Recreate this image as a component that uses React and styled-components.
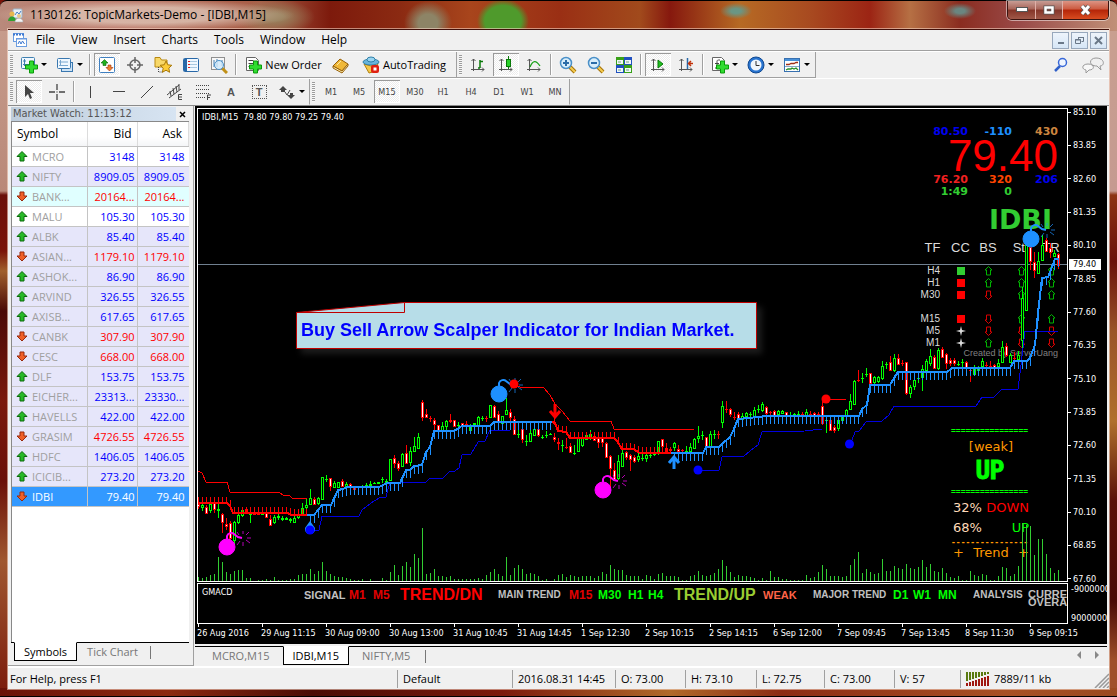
import { useState } from 'react';

import styled, { createGlobalStyle } from 'styled-components'


const GlobalStyle = createGlobalStyle`
  * {
    box-sizing: border-box;
  }

  body {
    margin: 0;
    background: #7a1208;
  }

  button, input {
    font: inherit;
    color: inherit;
    margin: 0;
    padding: 0;
    border: 0;
    background: none;
  }

  svg {
    display: block;
    flex: none;
  }
`

const UI = `'Open Sans', 'Noto Sans', sans-serif`
const TAHOMA = `'DejaVu Sans Condensed', 'DejaVu Sans', sans-serif`
const ARIAL = `'Liberation Sans', Arial, sans-serif`

/* ---------- window frame ---------- */

const Window = styled.div`
  display: flex;
  flex-direction: column;
  min-height: 100vh;
  padding: 0 8px 7px;
  border: 1px solid #000;
  border-width: 1px 0 1px 0;
  border-radius: 7px 7px 0 0;
  font: 11px/16px ${UI};
  color: #000;
  background:
    radial-gradient(ellipse 26px 22px at 503px 20px, #4f9a2c 70%, transparent),
    radial-gradient(ellipse 24px 22px at 428px 22px, #8d8466 40%, transparent),
    radial-gradient(ellipse 16px 8px at 736px 10px, #6a9684 30%, transparent),
    radial-gradient(ellipse 16px 8px at 960px 10px, #6a8680 30%, transparent),
    radial-gradient(ellipse 150px 16px at 145px 14px, rgba(226, 205, 190, 0.75) 50%, transparent),
    radial-gradient(ellipse 40px 18px at 275px 16px, #98805c 20%, transparent),
    linear-gradient(90deg, #b98a7c 0, #b5695a 120px, #a85f48 260px, #7d1a0c 330px, #8b2a12 400px, #a8451c 470px,
      #9a2f14 560px, #a14a1c 640px, #86180e 670px, #b66a24 740px, #a84a20 810px, #9c2414 870px, #b67044 910px,
      #8a2c20 960px, #9a4a48 1020px, #c09078 100%) 0 0 / 100% 30px no-repeat,
    linear-gradient(90deg, #6a1208, #8c2a10 15%, #4a0c06 28%, #7c1a0c 45%, #b06a2a 60%, #8c2c14 70%, #a85024 90%, #9a4a20) 0 100% / 100% 8px no-repeat,
    linear-gradient(180deg, #c9a090, #b98878 190px, #6a100a 194px, #7a1408 250px, #a0602c 270px, #4a0a06 310px, #7a1a0c 400px, #6a1008 480px, #a05830 560px, #7a1a0c) 0 0 / 8px 100% no-repeat,
    linear-gradient(180deg, #c9a090, #c59a90 190px, #8c3414 194px, #6a100a 260px, #9a5428 330px, #b0702c 420px, #5a1008 500px, #4a0a06 600px, #a0502a 660px) 100% 0 / 8px 100% no-repeat;
`

const TitleBar = styled.header`
  display: flex;
  align-items: center;
  height: 28px;
`

const Title = styled.h1`
  flex: 1;
  margin: 0 0 0 6px;
  font-size: 12px;
  font-weight: 400;
`

const CaptionButtons = styled.div`
  display: flex;
  align-self: flex-start;
  height: 19px;
  border: 1px solid #3a1410;
  border-top: 0;
  border-radius: 0 0 5px 5px;
  box-shadow: 0 0 0 1px rgba(255, 255, 255, 0.5);
  overflow: hidden;
`

const CaptionButton = styled.button`
  display: grid;
  place-items: center;
  width: ${({ $close }) => ($close ? 46 : 27)}px;
  border-left: ${({ $first }) => ($first ? 0 : 1)}px solid #e0b0a8;
  background: ${({ $close }) => $close
    ? 'linear-gradient(#dc9484, #cc5a40 45%, #b42408 50%, #d84c20)'
    : 'linear-gradient(#c89c94, #a86458 45%, #843428 50%, #a05848)'};
`

const Client = styled.div`
  flex: 1;
  display: flex;
  flex-direction: column;
  background: #f0f0f0;
  border-top: 1px solid #40100a;
  box-shadow: 0 0 0 1px rgba(255, 225, 210, 0.55);
`

/* ---------- menu ---------- */

const MenuBar = styled.nav`
  display: flex;
  align-items: center;
  height: 21px;
  padding: 0 2px 0 4px;
  border-bottom: 1px solid #a0a0a0;
  font-size: 12px;
`

const MenuItems = styled.div`
  flex: 1;
  display: flex;
  gap: 16px;
  padding-left: 8px;
`

const MenuButton = styled.button``

const MdiButtons = styled.div`
  display: flex;
  gap: 2px;
`

const MdiButton = styled.button`
  display: grid;
  place-items: center;
  width: 17px;
  height: 17px;
  border: 1px solid #98a8bc;
  background: linear-gradient(#eef4fb, #d6e6f6);
`

/* ---------- toolbars ---------- */

const ToolRow = styled.div`
  display: flex;
  height: 27px;
  border-top: 1px solid #fff;
`

const ToolGroup = styled.div`
  display: flex;
  align-items: center;
  padding-right: ${({ $pad }) => $pad || 0}px;
  border-right: 1px solid #a0a0a0;
  border-bottom: 1px solid ${({ $last }) => ($last ? 'transparent' : '#a0a0a0')};
`

const Grip = styled.span`
  width: 3px;
  height: 20px;
  margin: 0 2px;
  background: repeating-linear-gradient(#9c9c9c 0 1px, #f8f8f8 1px 2px);
`

const Tool = styled.button`
  display: flex;
  align-items: center;
  justify-content: center;
  width: ${({ $wide }) => $wide || 26}px;
  height: 23px;
  margin: 0 1px;
  gap: 3px;
  background: ${({ $on }) => ($on ? 'repeating-conic-gradient(#fff 0 25%, #ececec 0 50%) 0 0 / 2px 2px' : 'none')};
  box-shadow: ${({ $on }) => ($on ? 'inset 1px 1px #9a9a9a, inset -1px -1px #fff' : 'none')};
`

const ToolText = styled.span`
  font-size: ${({ $small }) => ($small ? 9 : 11)}px;
  font-family: ${({ $small }) => ($small ? TAHOMA : UI)};
  color: ${({ $small }) => ($small ? '#444' : '#000')};
  white-space: nowrap;
`

const ToolLetter = styled.span`
  width: 13px;
  font: bold 11px/12px ${ARIAL};
  text-align: center;
  color: #555;
  outline: ${({ $boxed }) => ($boxed ? '1px dotted #555' : 'none')};
`

const Divider = styled.span`
  width: 2px;
  height: 21px;
  margin: 0 2px;
  border-left: 1px solid #a0a0a0;
  border-right: 1px solid #fff;
`

const Caret = styled.span`
  border: 3px solid transparent;
  border-top-color: #000;
  border-bottom: 0;
`

const RightTools = styled.div`
  display: flex;
  align-items: center;
  gap: 2px;
  margin-left: auto;
`

/* ---------- body ---------- */

const Body = styled.div`
  flex: 1;
  display: flex;
  border-top: 1px solid #8a8a8a;
`

const Watch = styled.aside`
  display: flex;
  flex-direction: column;
  flex: none;
  width: 186px;
  padding: 1px 4px 3px 3px;
  border-right: 1px solid #a0a0a0;
  border-bottom: 1px solid #a0a0a0;
`

const WatchTitle = styled.div`
  display: flex;
  align-items: center;
  height: 14px;
  font: 11px/14px ${TAHOMA};
  color: #555;
`

const WatchName = styled.h2`
  flex: 1;
  margin: 0;
  padding-left: 2px;
  font: inherit;
  background: linear-gradient(90deg, #bfcddb, #d7e4f2);
`

const CloseButton = styled.button`
  width: 13px;
  color: #000;
  display: grid;
  place-items: center;
`

const List = styled.div`
  flex: 1;
  border-left: 1px solid #888;
  border-top: 1px solid #888;
  background: #fff;
`

const Quotes = styled.table`
  width: 100%;
  table-layout: fixed;
  border-collapse: collapse;
`

const HeadCell = styled.th`
  height: 24px;
  padding: 0 ${({ $last }) => ($last ? 6 : 5)}px;
  border-right: 1px solid #dcdcdc;
  border-bottom: 1px solid #c0c0c0;
  text-align: ${({ $left }) => ($left ? 'left' : 'right')};
  font-size: 12px;
  font-weight: 400;
  background: linear-gradient(#fff 60%, #f4f5f7);
`

const QuoteRow = styled.tr`
  height: 20px;
  background: ${({ $bg }) => $bg};
  color: ${({ $color }) => $color};
`

const Cell = styled.td`
  padding: 0 ${({ $last }) => ($last ? 4 : 2)}px 0 0;
  border-right: ${({ $last }) => ($last ? 0 : 1)}px solid #c4c4c4;
  border-bottom: 1px solid #c4c4c4;
  text-align: right;
  line-height: 17px;
  white-space: nowrap;
`

const NameCell = styled(Cell)`
  padding-left: 4px;
  text-align: left;
  color: ${({ $sel }) => ($sel ? '#fff' : '#a0a0a0')};
`

const NameWrap = styled.span`
  display: flex;
  align-items: center;
  gap: 4px;
`

const Tabs = styled.div`
  display: flex;
  height: 20px;
  padding-left: ${({ $pad }) => $pad}px;
  border-top: 1px solid #000;
`

const Tab = styled.button`
  height: 19px;
  margin-top: -1px;
  padding: 0 9px;
  line-height: 18px;
  color: ${({ $on }) => ($on ? '#000' : '#777')};
  background: ${({ $on }) => ($on ? '#fff' : 'none')};
  border: ${({ $on }) => ($on ? '1px solid #000' : '1px solid transparent')};
  border-top-color: ${({ $on }) => ($on ? '#fff' : 'transparent')};
`

const ChartTab = styled(Tab)`
  padding: 0 12px;
`

const TabEnd = styled.span`
  width: 1px;
  height: 13px;
  margin: 3px 0 0 2px;
  background: #777;
`

const TabArrows = styled.div`
  display: flex;
  gap: 13px;
  margin-left: auto;
  padding: 4px 7px 0 0;
`

const ChartColumn = styled.main`
  flex: 1;
  min-width: 0;
  display: flex;
  flex-direction: column;
  padding-right: 2px;
  margin-left: 1px;
`

/* ---------- chart ---------- */

const ChartWindow = styled.section`
  flex: 1;
  display: grid;
  grid-template-columns: minmax(0, 1fr) 39px;
  grid-template-rows: 1fr 41px 20px;
  padding: 2px 0 0 2px;
  background: #000;
  color: #fff;
  font: 9px/12px ${TAHOMA};
  margin-bottom: 2px;
`

const Plot = styled.div`
  position: relative;
  min-height: 474px;
  margin-bottom: 1px;
  border: 1px solid #fff;
  overflow: hidden;
`

const PlotTitle = styled.div`
  padding: 2px 4px;
  white-space: pre;
`

const Drawing = styled.svg`
  position: absolute;
  inset: 0;
  width: 100%;
  height: 100%;
`

const PriceScale = styled.div`
  position: relative;
  display: flex;
  flex-direction: column;
  justify-content: space-between;
  margin: -2px 0 -2px;
`

const Price = styled.span`
  display: flex;
  align-items: center;
  gap: 2px;

  &::before {
    content: '';
    width: 3px;
    height: 1px;
    background: #fff;
  }
`

const CurrentPrice = styled.span`
  position: absolute;
  top: 153px;
  left: 1px;
  width: 32px;
  padding-left: 4px;
  line-height: 11px;
  background: #fff;
  color: #000;
`

const TimeScale = styled.div`
  grid-column: 1 / -1;
  display: flex;
`

const Time = styled.span`
  flex: none;
  width: 64px;
  white-space: nowrap;

  &::before {
    content: '';
    display: block;
    width: 1px;
    height: 3px;
    margin: 0 0 0 1px;
    background: #fff;
  }
`

const Gmacd = styled.div`
  display: grid;
  grid-template-columns: 102px 45px 24px 27px 98px 71px 29px 30px 20px 26px 89px 50px 80px 20px 25px 35px 55px 1fr;
  padding: 2px 0 0 4px;
  border: 1px solid #fff;
  overflow: hidden;
  white-space: nowrap;
`

const Signal = styled.span`
  font: bold ${({ $size }) => $size || 12}px/18px ${ARIAL};
  color: ${({ $color }) => $color};
`

const Stack = styled.span`
  display: flex;
  flex-direction: column;
  font: bold 11px/8px ${ARIAL};
  color: silver;
  padding-top: 4px;
`

const GmacdScale = styled.div`
  display: flex;
  flex-direction: column;
  justify-content: space-between;
  padding: 0 0 0 3px;
  overflow: hidden;
`

/* corner panels over the plot */

const Ticker = styled.div`
  position: absolute;
  top: 17px;
  right: 9px;
  display: grid;
  grid-template-columns: 38px 44px 46px;
  text-align: right;
  font: bold 11px/12px 'DejaVu Sans', sans-serif;
`

const Fig = styled.span`
  color: ${({ $color }) => $color};
`

const LastPrice = styled.span`
  grid-column: 1 / -1;
  font: 44px/36px ${ARIAL};
  color: #f00;
`

const Instrument = styled.div`
  position: absolute;
  top: 96px;
  right: 15px;
  font: bold 27px/30px 'DejaVu Sans', sans-serif;
  color: #32cd32;
`

const Frames = styled.table`
  position: absolute;
  top: 130px;
  right: 7px;
  width: 140px;
  table-layout: fixed;
  border-collapse: collapse;
  font: 10px/12px ${ARIAL};
  color: #dcdcdc;
`

const FrameHead = styled.th`
  height: 26px;
  padding: 0;
  font-weight: 400;
  font-size: 13px;
  vertical-align: top;
  line-height: 18px;
`

const FrameCell = styled.td`
  height: ${({ $gap }) => ($gap ? 24 : 12)}px;
  padding: 0 ${({ $name }) => ($name ? 5 : 0)}px 0 0;
  vertical-align: bottom;
  text-align: ${({ $name }) => ($name ? 'right' : 'center')};

  svg {
    margin: 0 auto;
  }
`

const Credit = styled.div`
  position: absolute;
  top: 238px;
  right: 9px;
  font: 9px/12px ${ARIAL};
  color: #808080;
`

const Trend = styled.div`
  position: absolute;
  top: 317px;
  right: 36px;
  width: 80px;
  font: 13px/20px 'DejaVu Sans', sans-serif;
  color: #ff9800;
`

const Rule = styled.div`
  font: bold 8px/10px 'DejaVu Sans Mono', monospace;
  margin-bottom: ${({ $tight }) => ($tight ? -5 : 1)}px;
  color: ${({ $color }) => $color};
`

const TrendLine = styled.div`
  display: flex;
  justify-content: ${({ $center }) => ($center ? 'center' : 'space-between')};
  padding: 0 2px;
  color: ${({ $color }) => $color};
`

const TrendUp = styled.div`
  margin: 1px 2px 4px 0;
  text-align: center;
  font: bold 25px/25px 'Liberation Sans Narrow', 'Roboto Condensed', 'Open Sans Condensed', 'Noto Sans ExtraCondensed', 'Noto Sans Condensed', ${ARIAL};
  -webkit-text-stroke: 1px #0f0;
  color: #0f0;
`

const Callout = styled.div`
  position: absolute;
  top: 193px;
  left: 98px;
  width: 461px;
  height: 48px;
  padding: 18px 5px 0;
  font: bold 18px/20px ${ARIAL};
  color: #0000ff;
  white-space: nowrap;
  filter: drop-shadow(5px 5px 3px #1c1c1c);

  svg {
    position: absolute;
    inset: 0;
  }

  span {
    position: relative;
  }
`

/* ---------- status ---------- */

const StatusBar = styled.footer`
  display: flex;
  align-items: center;
  height: 23px;
  border-top: 2px solid #fff;
  padding-left: 2px;
`

const StatusText = styled.span`
  flex: 1;
`

const Status = styled.span`
  display: flex;
  align-items: center;
  gap: 4px;
  width: ${({ $w }) => $w}px;
  height: 18px;
  padding-left: 5px;
  border-left: 1px solid #a0a0a0;
`

const Resize = styled.svg`
  align-self: flex-end;
  margin-left: auto;
`

/* ---------- icons ---------- */

const Svg = ({ s = 18, children }) => (
  <svg width={s} height={s} viewBox={`0 0 ${s} ${s}`} fill="none">{children}</svg>
)

const Plus = ({ x, y }) => (
  <path d={`M${x + 4} ${y}h4v4h4v4h-4v4h-4v-4h-4v-4h4z`} fill="#30dc30" stroke="#0a9a0a" />
)

const Axes = () => (
  <path d="M4.500 3v12M2.500 5l2-2 2 2M2 13.500h13M13 11.500l2 2-2 2" stroke="#555" />
)

const Glass = ({ sign }) => (
  <Svg>
    <path d="M11 11l5 5" stroke="#a87408" strokeWidth="4" />
    <path d="M11 11l5 5" stroke="#f4cc50" strokeWidth="2" />
    <circle cx="7" cy="7" r="5.500" fill="#d8eefb" stroke="#4a90c8" strokeWidth="1.500" />
    <path d={sign} stroke="#2a6ca8" strokeWidth="2" />
  </Svg>
)

const icons = {
  app: (
    <Svg s={16}>
      <rect x="5" y="2" width="9" height="9" rx="1" fill="#e8f0f8" stroke="#9cb4c8" />
      <path d="M7 8l2-3 2 2 2-3" stroke="#4a80c0" />
      <circle cx="4" cy="7" r="2.500" fill="#e8b850" />
      <path d="M0 14c0-6 8-6 8 0z" fill="#30a030" />
      <circle cx="11" cy="9" r="2" fill="#e8c888" />
      <path d="M7 15c0-5 8-5 8 0z" fill="#f4f4f4" stroke="#a0a8b0" strokeWidth=".5" />
    </Svg>
  ),
  charts: (
    <Svg s={16}>
      <rect x="1.500" y="1.500" width="10" height="8" fill="#fff" stroke="#6a9ce0" />
      <path d="M1 2.500h11" stroke="#3c78d0" strokeWidth="2" strokeDasharray="2 1" />
      <rect x="4.500" y="6.500" width="10" height="8" fill="#fff" stroke="#6a9ce0" />
      <path d="M4 7h11" stroke="#6a9ce0" />
      <path d="M6 12l1.500-3 1.500 3 1.500-3 2 3" stroke="#3c78d0" />
    </Svg>
  ),
  newChart: (
    <Svg>
      <rect x="1.500" y="1.500" width="13" height="11" rx="1" fill="#f0f8ff" stroke="#4080b0" />
      <path d="M4.500 3v7M3 8.500h8M3 5h3" stroke="#4080b0" />
      <Plus x={5.500} y={5} />
    </Svg>
  ),
  profiles: (
    <Svg>
      <rect x="5.500" y="6.500" width="11" height="9" fill="#cfe4f6" stroke="#3a78b0" />
      <rect x="1.500" y="2.500" width="13" height="10" rx="1" fill="#f0f8ff" stroke="#3a78b0" />
      <path d="M4.500 4v6M3 6h9M3 9.500h9" stroke="#7aa8d0" />
    </Svg>
  ),
  watch: (
    <Svg>
      <rect x="1.500" y="1.500" width="15" height="15" rx="1" fill="#fff" stroke="#4080c0" />
      <path d="M6.500 3.500L10 7H8v2.500H5V7H3z" fill="#20b020" stroke="#086808" strokeWidth=".6" />
      <path d="M11.500 15L15 11.500h-2V9h-3v2.500H8z" fill="#f08030" stroke="#a03008" strokeWidth=".6" />
    </Svg>
  ),
  data: (
    <Svg>
      <circle cx="9" cy="9" r="5" stroke="#666" strokeWidth="1.500" />
      <path d="M9 1v6M9 11v6M1 9h6M11 9h6" stroke="#666" strokeWidth="1.500" />
    </Svg>
  ),
  navigator: (
    <Svg>
      <path d="M1 4V1.500h5L7.500 4H13v7H1z" fill="#f8d868" stroke="#b88810" />
      <path d="M4.500 11v5h4" stroke="#444" strokeDasharray="1 1" />
      <path d="M12 5l1.800 3.800 4 .5-3 2.800.8 4.200L12 14.200l-3.600 2.100.8-4.200-3-2.800 4-.5z" fill="#fccc38" stroke="#a87808" />
    </Svg>
  ),
  terminal: (
    <Svg>
      <rect x="1.500" y="2.500" width="15" height="13" rx="1" fill="#f0f8ff" stroke="#2868a8" />
      <rect x="2" y="3" width="3" height="12" fill="#2868a8" />
      <path d="M6 5.500h2M6 8.500h2M6 11.500h2" stroke="#e02020" />
      <path d="M8 5.500h7M8 8.500h7M8 11.500h7" stroke="#a8c8e0" />
    </Svg>
  ),
  tester: (
    <Svg>
      <rect x="1.500" y="1.500" width="13" height="12" fill="#f8f8f8" stroke="#909090" />
      <path d="M4 4v7M7 3v8M12 4v6" stroke="#4880b0" />
      <path d="M12 12l5 5" stroke="#c09018" strokeWidth="3" />
      <circle cx="9" cy="9" r="4.500" fill="#cfe8fa" fillOpacity=".8" stroke="#4a90c8" />
    </Svg>
  ),
  order: (
    <Svg>
      <path d="M2.500 1.500h9l3 3v10h-12z" fill="#fff" stroke="#666" />
      <path d="M4.500 4.500h5M4.500 7.500h6M4.500 10.500h4" stroke="#444" />
      <Plus x={5.500} y={5} />
    </Svg>
  ),
  book: (
    <Svg>
      <path d="M1 10l7-7 8 5-6 7z" fill="#f0b838" stroke="#986008" />
      <path d="M1 10v2l9 5 6-7V8l-6 7z" fill="#fff0b0" stroke="#986008" />
      <path d="M5 9l4-4" stroke="#fce8a0" />
    </Svg>
  ),
  auto: (
    <Svg>
      <path d="M2 8l7 2 7-3-2 8-7 2z" fill="#f4c848" stroke="#b08010" />
      <ellipse cx="9" cy="6" rx="8" ry="3" fill="#68b4dc" stroke="#3080a8" />
      <ellipse cx="9" cy="3.500" rx="4" ry="2.500" fill="#98d4f0" stroke="#3080a8" />
      <rect x="9" y="9" width="8" height="8" rx="2" fill="#e02010" />
      <rect x="11.500" y="11.500" width="3" height="3" fill="#fff" />
    </Svg>
  ),
  bars: <Svg><Axes /><path d="M9 12h2M11 4v8M11 5.500h3" stroke="#087808" strokeWidth="1.500" /></Svg>,
  candles: (
    <Svg>
      <Axes />
      <path d="M11.500 0v13" stroke="#087808" />
      <rect x="9.500" y="3.500" width="4" height="7" fill="#28d028" stroke="#087808" />
    </Svg>
  ),
  line: <Svg><Axes /><path d="M5 11c3-7 6-7 10-1" stroke="#18a018" strokeWidth="1.300" /></Svg>,
  zoomIn: <Glass sign="M4 7h6M7 4v6" />,
  zoomOut: <Glass sign="M4 7h6" />,
  tile: (
    <Svg>
      <path d="M1 1h8v8H1zM9 9h8v8H9z" fill="#38a018" />
      <path d="M9 1h8v8H9zM1 9h8v8H1z" fill="#2050c0" />
      <path d="M2 4h6v4H2zM10 4h6v4h-6zM2 12h6v4H2zM10 12h6v4h-6z" fill="#f0f8f8" />
      <path d="M3 6h3M11 6h3M3 14h3M11 14h3" stroke="#70a080" />
    </Svg>
  ),
  scroll: <Svg><Axes /><path d="M9 4l5 4-5 4z" fill="#20c020" stroke="#087808" /></Svg>,
  shift: (
    <Svg>
      <Axes />
      <path d="M10.500 2v11" stroke="#2868a8" strokeWidth="1.500" />
      <path d="M16 7.500h-4M14 5l-2.500 2.500L14 10" stroke="#c03008" strokeWidth="1.500" />
    </Svg>
  ),
  indicators: (
    <Svg>
      <path d="M1.500 1.500h9l3 3v10h-12z" fill="#fff" stroke="#666" />
      <path d="M9 4H7.500C6 4 6 5 6 6v6H4M4 7.500h4" stroke="#444" />
      <Plus x={5.500} y={5} />
    </Svg>
  ),
  clock: (
    <Svg>
      <circle cx="9" cy="9" r="8" fill="#2874d0" stroke="#104890" />
      <circle cx="9" cy="9" r="5.500" fill="#f0f6fc" />
      <path d="M9 5v4.500h3.500" stroke="#333" />
    </Svg>
  ),
  template: (
    <Svg>
      <rect x="1.500" y="2.500" width="15" height="13" fill="#fff" stroke="#3870b0" />
      <path d="M2 4h14" stroke="#4890d8" strokeWidth="2" />
      <path d="M3 8.500h3l2-1h3l2-1h2" stroke="#a03018" strokeWidth="1.300" />
      <path d="M2 10.500h14" stroke="#88a8c8" />
      <path d="M3 14l2-1h3l1-1 2 1 2-1 2 2" stroke="#289028" strokeWidth="1.300" />
    </Svg>
  ),
  search: (
    <Svg>
      <path d="M3 15l5-5" stroke="#3060c8" strokeWidth="2.500" />
      <circle cx="10.500" cy="6.500" r="4" fill="#f0f6ff" stroke="#3868d8" strokeWidth="1.500" />
    </Svg>
  ),
  chat: (
    <svg width="22" height="18" viewBox="0 0 22 18">
      <path d="M14 2c9 0 9 8 4 8l1 4-4-4C6 10 7 2 14 2z" fill="#f0f0f0" stroke="#999" />
      <path d="M6 8c7 0 7 6 1 6l-3 3v-3c-5-1-4-6 2-6z" fill="#f8f8f8" stroke="#999" />
    </svg>
  ),
  cursor: <Svg><path d="M5 2v12l3-3 2 5 2-1-2-5h4z" fill="#444" /></Svg>,
  cross: <Svg><path d="M9 1v6M9 11v6M1 9h6M11 9h6M9 8.500v1" stroke="#444" strokeWidth="1.300" /></Svg>,
  vertical: <Svg><path d="M8.500 3v12" stroke="#444" /></Svg>,
  horizontal: <Svg><path d="M3 8.500h12" stroke="#444" /></Svg>,
  trend: <Svg><path d="M3 15L15 3" stroke="#444" /></Svg>,
  channel: (
    <Svg>
      <path d="M1 12L13 2M3 15l12-9M4 8l1 5M7 5l1 6M10 3l1 6M13 1l0 6" stroke="#444" />
      <path d="M16 11.500h-3.500v5H16M12.500 14H16" stroke="#444" />
    </Svg>
  ),
  fibo: (
    <Svg>
      <path d="M2 2.500h14M2 6.500h14M2 10.500h14M2 14.500h9" stroke="#444" strokeDasharray="1 1" />
      <path d="M13.500 17v-5H17M13.500 14.500H16" stroke="#444" />
    </Svg>
  ),
  arrows: (
    <Svg>
      <path d="M5 3L1 7h2v2h4V7h2z M13 16l4-4h-2v-2h-3v2h-3z" fill="#444" />
      <path d="M7 9l2 3 3-5" stroke="#444" />
    </Svg>
  ),
}

const upArrow = (
  <svg width="12" height="12" viewBox="0 0 12 12">
    <path d="M6 1.500l5 5H8V11H4V6.500H1z" fill="#28b828" stroke="#0a6a0a" strokeLinejoin="round" />
  </svg>
)

const downArrow = (
  <svg width="12" height="12" viewBox="0 0 12 12">
    <path d="M6 11L1 6h3V2h4v4h3z" fill="#f06028" stroke="#98280a" strokeLinejoin="round" />
  </svg>
)

const signs = {
  up: <svg width="9" height="12" viewBox="0 0 9 12"><path d="M4.500 1.500L8 5H6.500v5h-4V5H1z" fill="none" stroke="#00b400" /></svg>,
  down: <svg width="9" height="12" viewBox="0 0 9 12"><path d="M4.500 10.500L1 7h1.500V2h4v5H8z" fill="none" stroke="#d80000" /></svg>,
  green: <svg width="8" height="12"><path d="M0 2h8v8H0z" fill="#32cd32" /></svg>,
  red: <svg width="8" height="12"><path d="M0 2h8v8H0z" fill="#f00" /></svg>,
  star: <svg width="10" height="12" viewBox="0 0 10 12"><path d="M5 1l1 4 4 1-4 1-1 4-1-4-4-1 4-1z" fill="#dcdcdc" /></svg>,
}

/* ---------- data ---------- */

const quotes = [
  ['MCRO', '3148', '3148', 1], ['NIFTY', '8909.05', '8909.05', 1], ['BANK...', '20164...', '20164...', 0],
  ['MALU', '105.30', '105.30', 1], ['ALBK', '85.40', '85.40', 1], ['ASIAN...', '1179.10', '1179.10', 0],
  ['ASHOK...', '86.90', '86.90', 1], ['ARVIND', '326.55', '326.55', 1], ['AXISB...', '617.65', '617.65', 1],
  ['CANBK', '307.90', '307.90', 0], ['CESC', '668.00', '668.00', 0], ['DLF', '153.75', '153.75', 1],
  ['EICHER...', '23313...', '23330...', 1], ['HAVELLS', '422.00', '422.00', 1], ['GRASIM', '4726.55', '4726.55', 0],
  ['HDFC', '1406.05', '1406.05', 1], ['ICICIB...', '273.20', '273.20', 1], ['IDBI', '79.40', '79.40', 0],
]

const rowColor = (name) => {
  if (name === 'IDBI') return '#3399ff'
  if (name === 'BANK...') return '#e0ffff'
  if (name === 'MCRO' || name === 'MALU') return '#fff'
  return '#e6e6fa'
}

const prices = ['85.10', '83.85', '82.60', '81.35', '80.10', '78.85', '77.60', '76.35', '75.10', '73.85', '72.60', '71.35', '70.10', '68.85', '67.60']

const times = [
  '26 Aug 2016', '29 Aug 11:15', '30 Aug 09:00', '30 Aug 13:00', '31 Aug 10:45', '31 Aug 14:45', '1 Sep 12:30',
  '2 Sep 10:15', '2 Sep 14:15', '6 Sep 12:00', '7 Sep 09:45', '7 Sep 13:45', '8 Sep 11:30', '9 Sep 09:15',
]

const frames = [
  ['H4', 'green', 'up', 'up', 'up'],
  ['H1', 'red', 'up', 'up', 'up'],
  ['M30', 'red', 'down', 'up', 'up'],
  ['M15', 'red', 'down', 'up', 'up'],
  ['M5', 'star', 'down', 'down', 'down'],
  ['M1', 'star', 'up', 'down', 'down'],
]

// high, low, body top, body bottom, rising; one bar every 4px
const bars = [
  [502,509,504,506,0],[503,511,505,507,1],[505,513,507,513,0],[503,513,504,510,1],[502,513,502,509,0],[503,518,509,510,1],
  [513,533,514,522,0],[518,530,524,526,0],[521,540,523,538,0],[521,545,522,540,1],[512,524,515,522,1],[509,517,510,515,1],
  [507,513,509,511,0],[511,523,513,514,1],[512,514,513,514,0],[512,514,513,514,0],[511,515,513,514,1],[511,518,513,517,0],
  [515,526,519,525,0],[515,524,517,522,1],[514,520,516,517,1],[516,521,518,519,1],[517,520,518,519,1],[518,523,519,520,1],
  [516,523,518,522,1],[514,519,515,517,1],[503,514,508,513,1],[499,514,505,507,1],[489,504,498,504,1],[497,505,499,504,0],
  [497,505,498,503,1],[477,500,477,499,1],[475,482,479,479,1],[478,491,478,486,0],[481,487,483,487,1],[482,487,482,487,1],
  [479,487,481,486,0],[482,488,484,486,1],[483,490,484,487,0],[487,490,488,489,0],[486,488,487,487,1],[485,488,486,487,1],
  [483,487,485,486,1],[481,486,484,485,1],[482,484,483,483,1],[482,483,482,483,1],[477,483,479,479,1],[479,484,481,482,1],
  [459,480,459,480,1],[455,468,458,463,0],[461,471,463,468,0],[453,467,454,466,1],[445,464,453,463,0],[447,466,451,462,1],
  [437,452,446,451,1],[433,448,437,448,1],[400,421,402,417,0],[409,418,414,417,0],[416,422,418,418,0],[418,432,420,424,0],
  [425,430,425,430,0],[422,431,426,430,1],[420,430,421,426,1],[414,423,420,421,0],[420,427,420,426,0],[422,427,425,425,1],
  [423,426,423,426,0],[421,428,424,425,0],[424,430,426,430,1],[423,425,423,424,1],[416,425,417,425,1],[416,421,418,418,1],
  [416,422,418,418,0],[405,418,405,417,1],[405,417,406,417,0],[411,421,414,421,0],[416,425,416,423,1],[398,414,410,414,1],
  [409,421,412,417,0],[416,435,419,434,0],[430,438,434,434,1],[429,443,429,439,0],[435,446,441,441,1],[428,441,433,441,1],
  [425,436,429,435,1],[428,437,429,435,0],[435,439,437,437,1],[431,438,435,435,1],[433,435,434,434,1],[433,442,437,439,0],
  [438,450,442,443,0],[440,452,445,445,1],[438,449,447,447,0],[443,453,446,452,0],[445,455,453,453,1],[437,452,438,451,1],
  [433,447,437,445,1],[433,440,435,439,1],[430,440,434,438,1],[433,441,436,440,0],[437,448,438,442,0],[437,447,438,442,0],
  [442,458,443,457,0],[455,487,456,468,0],[463,480,470,479,0],[455,480,461,478,1],[449,467,453,466,1],[451,460,452,457,0],
  [454,471,455,459,0],[455,463,457,461,0],[453,462,456,459,1],[454,461,458,458,1],[452,462,455,458,1],[453,458,455,455,1],
  [449,456,454,454,1],[441,455,441,453,1],[439,451,439,446,0],[443,452,448,451,0],[447,453,449,450,0],[442,451,443,447,1],
  [445,452,449,451,0],[449,453,450,450,0],[446,453,451,451,1],[443,452,447,451,1],[438,448,439,448,1],[426,443,436,438,1],
  [431,440,435,435,1],[437,447,437,446,0],[431,447,434,446,1],[430,439,434,434,1],[431,439,434,434,0],[401,428,406,422,1],
  [401,413,409,409,0],[408,417,409,414,0],[412,420,417,417,0],[412,419,414,418,0],[413,421,416,419,1],[412,420,413,416,1],
  [412,417,414,414,1],[407,417,410,416,1],[405,413,409,409,1],[402,412,404,410,1],[406,418,407,413,0],[411,415,412,412,0],
  [410,416,411,415,0],[410,415,411,414,1],[410,414,411,413,1],[412,417,412,416,0],[412,417,415,415,1],[413,416,414,414,1],
  [411,416,414,414,1],[412,416,414,414,0],[409,417,412,415,1],[411,415,414,414,0],[412,417,413,415,0],[412,416,414,415,0],
  [399,425,406,423,0],[417,433,420,420,1],[418,431,420,430,0],[425,433,427,430,0],[419,431,420,428,1],[415,421,417,420,1],
  [409,420,410,416,1],[394,410,401,409,1],[380,405,381,404,1],[370,382,380,380,0],[373,383,378,378,1],[368,377,374,374,1],
  [373,385,373,383,0],[376,384,377,382,1],[376,383,377,381,1],[361,380,366,378,1],[362,369,364,364,1],[356,371,362,370,0],
  [354,372,358,370,1],[354,365,358,364,0],[360,366,363,363,0],[362,395,362,393,0],[385,398,387,393,1],[374,390,380,386,1],
  [374,383,378,378,1],[365,391,369,377,1],[359,372,361,370,1],[349,366,356,363,1],[355,369,357,368,0],[348,370,350,368,1],
  [347,358,349,357,0],[353,369,354,363,0],[358,366,360,363,0],[358,366,360,363,0],[361,366,364,364,1],[359,367,362,362,1],
  [361,370,362,368,0],[367,382,370,370,0],[365,375,368,374,1],[366,373,369,370,1],[358,368,361,366,1],[362,368,365,365,0],
  [361,368,366,366,0],[364,367,365,367,0],[359,368,363,366,1],[341,363,347,362,1],[343,357,346,355,0],[353,363,355,362,1],
  [352,362,358,358,0],[351,362,355,359,1],[287,352,298,340,1],[235,311,245,310,1],[243,270,247,261,0],[252,278,262,270,0],
  [252,273,261,273,1],[235,260,245,260,1],[238,252,240,251,0],[243,258,248,252,0],[250,256,253,256,1],[253,269,254,265,0],
]

const volumes = [
  4,3,4,6,7,24,19,9,7,10,11,11,3,3,0,1,1,2,1,4,1,1,1,2,2,6,7,7,12,7,10,19,10,7,5,4,4,3,2,1,1,2,0,2,0,0,3,1,9,16,6,15,19,
  14,27,23,53,7,8,12,5,5,4,5,2,2,2,2,2,2,3,2,6,9,12,7,5,24,6,13,16,12,7,8,7,5,1,2,0,2,6,7,4,6,5,4,5,5,5,3,5,9,7,16,12,11,
  11,6,5,5,5,2,6,5,2,7,8,5,5,5,4,1,1,5,6,10,6,5,6,8,12,21,15,9,4,6,5,5,4,3,1,3,1,10,4,4,2,2,1,1,1,1,6,3,4,9,16,12,5,5,5,4,
  5,16,22,29,8,12,9,7,8,22,10,10,15,13,12,17,13,12,14,21,14,17,10,9,13,8,4,3,5,1,1,10,6,5,7,6,1,1,5,14,13,5,7,15,58,56,55,
  26,42,42,27,13,8,11,
]

const blueBands = [
  [[307,515],[314,515],[322,505],[331,505],[338,490],[343,489],[347,487],[379,487],[387,483],[400,483],[406,470],[410,470],
    [414,466],[422,465],[426,452],[430,447],[434,431],[454,431],[462,426],[490,426],[494,422],[552,422]],
  [[671,453],[703,453],[706,447],[719,447],[723,443],[730,437],[734,429],[738,419],[758,417],[766,416],[859,416],[862,409],
    [867,405],[870,385],[890,385],[894,378],[898,372],[947,372],[952,368],[1010,368],[1014,361],[1027,361],[1030,358],
    [1033,350],[1035,345],[1038,313],[1042,278],[1048,277],[1052,267],[1055,259],[1059,259]],
]

const redBands = [
  [[197,503],[227,503],[230,506],[233,513],[288,513],[291,515],[307,515]],
  [[552,422],[555,423],[558,431],[566,432],[570,438],[614,438],[617,441],[622,449],[633,449],[640,453],[671,453]],
]

const redStops = [
  '198,471 202,473 206,482 227,482 230,492 279,492 283,495 290,496 292,498 307,498',
  '516,386 520,387 543,387 550,395 555,404 562,411 570,421 611,421 614,429 694,429',
  '826,399 846,399',
]

const blueStops = [
  '310,531 319,530 322,516 359,516 362,510 371,503 379,498 386,497 390,482 426,482 430,478 443,478 450,471 455,471 459,468 462,455 471,454 478,442 485,441 490,430 510,430',
  '698,470 719,470 722,457 744,456 750,451 758,445 762,432 805,431 822,429',
  '850,444 852,440 855,432 859,431 866,422 882,421 889,415 894,406 976,406 982,397 994,397 1001,390 1018,389 1021,365 1025,331 1058,331',
]

const levelAt = (band, x) => {
  for (let i = 1; i < band.length; i++) {
    const [x0, y0] = band[i - 1]
    const [x1, y1] = band[i]
    if (x >= x0 && x <= x1) return Math.round(y0 + ((y1 - y0) * (x - x0)) / (x1 - x0))
  }
  return null
}

/* ---------- chart drawing ---------- */

const Band = ({ points, color, up }) => {
  const teeth = bars.map((_, i) => 198 + i * 4).filter((x) => levelAt(points, x) !== null)
  return (
    <g fill={color}>
      <polyline points={points.join(' ')} fill="none" stroke={color} strokeWidth="2" />
      {teeth.map((x) => (
        <rect key={x} x={x} y={levelAt(points, x) - (up ? 6 : 0)} width="1" height={up ? 6 : 8} />
      ))}
    </g>
  )
}

const Bomb = ({ x, y, color }) => (
  <g transform={`translate(${x} ${y})`} stroke={color} fill="none">
    <circle r="8" fill={color} />
    <path d="M0-8v-3c1-3 5-4 7-2l4 3 4 1" strokeWidth="2" />
    <path d="M19-12l3-3M20-9h4M19-7l4 3M16-5v4M13-6l-3 4M16-13v-3M12-12l-2-3" strokeWidth="1" opacity=".7" />
  </g>
)

const PriceDrawing = () => (
  <Drawing viewBox="198 109 869 472" preserveAspectRatio="xMinYMin meet" shapeRendering="crispEdges">
    <path d="M198 264.500h869" stroke="#708090" />
    {volumes.map((v, i) => (
      <rect key={i} x={198 + i * 4} y={581 - v} width="1" height={v} fill="#32cd32" />
    ))}
    {bars.map(([high, low, top, bottom, up], i) => {
      const x = 198 + i * 4
      const color = up ? '#0f0' : '#f00'
      return (
        <g key={i}>
          <rect x={x} y={high} width="1" height={low - high} fill={color} />
          <rect x={x - 1} y={top} width="3" height={bottom - top + 1} fill={color} />
          {bottom - top > 1 && (
            <rect x={x} y={top + 1} width="1" height={bottom - top - 1} fill={up ? '#000' : '#fff'} />
          )}
        </g>
      )
    })}
    <g fill="none" stroke="#f00">
      {redStops.map((p) => <polyline key={p} points={p} />)}
    </g>
    <g fill="none" stroke="#0000e0">
      {blueStops.map((p) => <polyline key={p} points={p} />)}
    </g>
    {redBands.map((b, i) => <Band key={i} points={b} color="#f00" up />)}
    {blueBands.map((b, i) => <Band key={i} points={b} color="#1e90ff" />)}
    <g shapeRendering="auto">
      <path d="M310 521l5 7c1 8-11 8-10 0z" fill="#1e90ff" />
      <path d="M555 404v12M550 411l5 6 5-6" stroke="#f00" strokeWidth="3" fill="none" />
      <path d="M674 469v-11M669 463l5-6 5 6" stroke="#1e90ff" strokeWidth="3" fill="none" />
      <Bomb x={227} y={547} color="#f0f" />
      <Bomb x={603} y={490} color="#f0f" />
      <Bomb x={499} y={394} color="#1e90ff" />
      <Bomb x={1031} y={239} color="#1e90ff" />
      <g fill="#00f">
        <circle cx="310" cy="530" r="4.500" />
        <circle cx="698" cy="470" r="4.500" />
        <circle cx="849.500" cy="444" r="4.500" />
      </g>
      <circle cx="514" cy="384" r="4.500" fill="#f00" />
      <circle cx="826" cy="399" r="4.500" fill="#f00" />
    </g>
  </Drawing>
)

const Chart = () => (
  <ChartWindow>
    <Plot>
      <PlotTitle>IDBI,M15  79.80 79.80 79.25 79.40</PlotTitle>
      <Ticker>
        <Fig $color="#0000f0">80.50</Fig>
        <Fig $color="#1e90ff">-110</Fig>
        <Fig $color="#cd853f">430</Fig>
        <LastPrice>79.40</LastPrice>
        <Fig $color="#f22020">76.20</Fig>
        <Fig $color="#ff4500">320</Fig>
        <Fig $color="#0000f0">206</Fig>
        <Fig $color="#32cd32">1:49</Fig>
        <Fig $color="#32cd32">0</Fig>
      </Ticker>
      <Instrument>IDBI</Instrument>
      <Frames>
        <colgroup>
          <col width="25" />
          <col width="31" />
          <col width="24" />
          <col width="42" />
          <col width="18" />
        </colgroup>
        <thead>
          <tr>
            {['TF', 'CC', 'BS', 'Str', 'TR'].map((h) => <FrameHead key={h}>{h}</FrameHead>)}
          </tr>
        </thead>
        <tbody>
          {frames.map(([name, ...cells]) => (
            <tr key={name}>
              <FrameCell $name $gap={name === 'M15'}>{name}</FrameCell>
              {cells.map((c, i) => <FrameCell key={i}>{signs[c]}</FrameCell>)}
            </tr>
          ))}
        </tbody>
      </Frames>
      <Credit>Created by ServerUang</Credit>
      <Trend>
        <Rule $color="#0f0">================</Rule>
        <TrendLine $center>[weak]</TrendLine>
        <TrendUp>UP</TrendUp>
        <Rule $color="#0f0">================</Rule>
        <TrendLine $color="#ffdab9">32% <Fig $color="#f00">DOWN</Fig></TrendLine>
        <TrendLine $color="#ffdab9">68% <Fig $color="#0f0">UP</Fig></TrendLine>
        <Rule $tight $color="#ff9800">----------------</Rule>
        <TrendLine><span>+</span><span>Trend</span><span>+</span></TrendLine>
      </Trend>
      <PriceDrawing />
      <Callout>
        <svg width="461" height="48" viewBox="0 0 461 48">
          <path d="M.500 10.500L108.500.500h352v46H.500z" fill="#b7dde8" stroke="#c00000" />
          <path d="M.500 10.500h108V.500" fill="none" stroke="#c00000" />
        </svg>
        <span>Buy Sell Arrow Scalper Indicator for Indian Market.</span>
      </Callout>
    </Plot>
    <PriceScale>
      {prices.map((p) => <Price key={p}>{p}</Price>)}
      <CurrentPrice>79.40</CurrentPrice>
    </PriceScale>
    <Gmacd>
      <span>GMACD</span>
      <Signal $size={11} $color="silver">SIGNAL</Signal>
      <Signal $color="#e00000">M1</Signal>
      <Signal $color="#e00000">M5</Signal>
      <Signal $size={16} $color="#f00">TREND/DN</Signal>
      <Signal $size={10} $color="silver">MAIN TREND</Signal>
      <Signal $color="#e00000">M15</Signal>
      <Signal $color="#0f0">M30</Signal>
      <Signal $color="#0f0">H1</Signal>
      <Signal $color="#0f0">H4</Signal>
      <Signal $size={16} $color="#9acd32">TREND/UP</Signal>
      <Signal $size={11} $color="#ff6347">WEAK</Signal>
      <Signal $size={10} $color="silver">MAJOR TREND</Signal>
      <Signal $color="#0f0">D1</Signal>
      <Signal $color="#0f0">W1</Signal>
      <Signal $color="#0f0">MN</Signal>
      <Signal $size={10} $color="silver">ANALYSIS</Signal>
      <Stack><span>CURRENT</span><span>OVERALL</span></Stack>
    </Gmacd>
    <GmacdScale>
      <span>-90000000</span>
      <span>90000000</span>
    </GmacdScale>
    <TimeScale>
      {times.map((t) => <Time key={t}>{t}</Time>)}
    </TimeScale>
  </ChartWindow>
)

/* ---------- app ---------- */

const IconTool = ({ name, label, on, caret }) => (
  <Tool aria-label={label} $on={on} $wide={caret ? 34 : 26}>
    {icons[name]}
    {caret && <Caret />}
  </Tool>
)

const App = () => {
  const [ frame, setFrame ] = useState('M15')

  return (
    <>
      <GlobalStyle />
      <Window>
        <TitleBar>
          {icons.app}
          <Title>1130126: TopicMarkets-Demo - [IDBI,M15]</Title>
          <CaptionButtons>
            <CaptionButton $first aria-label="Minimize">
              <svg width="12" height="6"><rect x=".5" y=".5" width="11" height="4" fill="#fff" stroke="#555" /></svg>
            </CaptionButton>
            <CaptionButton aria-label="Maximize">
              <svg width="12" height="10"><path d="M2.500 2.500h7v5h-7z" fill="none" stroke="#555" strokeWidth="4" /><path d="M2.500 2.500h7v5h-7z" fill="none" stroke="#fff" strokeWidth="2.500" /></svg>
            </CaptionButton>
            <CaptionButton $close aria-label="Close">
              <svg width="13" height="12"><path d="M3 2l7 8M10 2L3 10" stroke="#555" strokeWidth="4.500" /><path d="M3 2l7 8M10 2L3 10" stroke="#fff" strokeWidth="3" /></svg>
            </CaptionButton>
          </CaptionButtons>
        </TitleBar>
        <Client>
          <MenuBar>
            {icons.charts}
            <MenuItems>
              {['File', 'View', 'Insert', 'Charts', 'Tools', 'Window', 'Help'].map((m) => (
                <MenuButton key={m}>{m}</MenuButton>
              ))}
            </MenuItems>
            <MdiButtons>
              <MdiButton aria-label="Minimize chart">
                <svg width="9" height="9"><path d="M2 7h6" stroke="#6a7888" strokeWidth="2" /></svg>
              </MdiButton>
              <MdiButton aria-label="Restore chart">
                <svg width="9" height="9" fill="none" stroke="#6a7888"><path d="M3.500 3V1.500h5v4H6.500M3 1.500h6" /><path d="M.500 3.500h5v4h-5zM0 4h6" /></svg>
              </MdiButton>
              <MdiButton aria-label="Close chart">
                <svg width="9" height="9"><path d="M1 1l7 7M8 1L1 8" stroke="#6a7888" strokeWidth="2" /></svg>
              </MdiButton>
            </MdiButtons>
          </MenuBar>
          <ToolRow>
            <ToolGroup $pad={3}>
              <Grip />
              <IconTool name="newChart" label="New chart" caret />
              <IconTool name="profiles" label="Profiles" caret />
              <Divider />
              <IconTool name="watch" label="Market Watch" on />
              <IconTool name="data" label="Data Window" />
              <IconTool name="navigator" label="Navigator" />
              <IconTool name="terminal" label="Terminal" />
              <IconTool name="tester" label="Strategy Tester" />
              <Divider />
              <Tool $wide={86}>{icons.order}<ToolText>New Order</ToolText></Tool>
              <IconTool name="book" label="MetaEditor" />
              <Tool $wide={96}>{icons.auto}<ToolText>AutoTrading</ToolText></Tool>
            </ToolGroup>
            <ToolGroup $pad={1}>
              <Grip />
              <IconTool name="bars" label="Bar chart" />
              <IconTool name="candles" label="Candlesticks" on />
              <IconTool name="line" label="Line chart" />
              <Divider />
              <IconTool name="zoomIn" label="Zoom in" />
              <IconTool name="zoomOut" label="Zoom out" />
              <IconTool name="tile" label="Tile windows" />
              <Divider />
              <IconTool name="scroll" label="Auto scroll" on />
              <IconTool name="shift" label="Chart shift" />
              <Divider />
              <IconTool name="indicators" label="Indicators" caret />
              <IconTool name="clock" label="Periods" caret />
              <IconTool name="template" label="Templates" caret />
            </ToolGroup>
            <RightTools>
              <IconTool name="search" label="Search" />
              <Tool $wide={30} aria-label="Chat">{icons.chat}</Tool>
            </RightTools>
          </ToolRow>
          <ToolRow>
            <ToolGroup $last>
              <Grip />
              <IconTool name="cursor" label="Cursor" on />
              <IconTool name="cross" label="Crosshair" />
              <Divider />
              <IconTool name="vertical" label="Vertical line" />
              <IconTool name="horizontal" label="Horizontal line" />
              <IconTool name="trend" label="Trendline" />
              <IconTool name="channel" label="Channel" />
              <IconTool name="fibo" label="Fibonacci" />
              <Tool><ToolLetter>A</ToolLetter></Tool>
              <Tool><ToolLetter $boxed>T</ToolLetter></Tool>
              <IconTool name="arrows" label="Arrows" caret />
            </ToolGroup>
            <ToolGroup $last>
              <Grip />
              {['M1', 'M5', 'M15', 'M30', 'H1', 'H4', 'D1', 'W1', 'MN'].map((f) => (
                <Tool key={f} $on={f === frame} onClick={() => setFrame(f)}>
                  <ToolText $small>{f}</ToolText>
                </Tool>
              ))}
            </ToolGroup>
          </ToolRow>
          <Body>
            <Watch>
              <WatchTitle>
                <WatchName>Market Watch: 11:13:12</WatchName>
                <CloseButton aria-label="Close Market Watch">
                  <svg width="7" height="7"><path d="M1 1l5 5M6 1L1 6" stroke="#000" strokeWidth="1.500" /></svg>
                </CloseButton>
              </WatchTitle>
              <List>
                <Quotes>
                  <colgroup>
                    <col width="75" />
                    <col width="50" />
                    <col />
                  </colgroup>
                  <thead>
                    <tr>
                      <HeadCell $left>Symbol</HeadCell>
                      <HeadCell>Bid</HeadCell>
                      <HeadCell $last>Ask</HeadCell>
                    </tr>
                  </thead>
                  <tbody>
                    {quotes.map(([name, bid, ask, up]) => (
                      <QuoteRow
                        key={name}
                        $bg={rowColor(name)}
                        $color={name === 'IDBI' ? '#fff' : up ? '#0000ff' : '#ff0000'}
                      >
                        <NameCell $sel={name === 'IDBI'}>
                          <NameWrap>{up ? upArrow : downArrow}{name}</NameWrap>
                        </NameCell>
                        <Cell>{bid}</Cell>
                        <Cell $last>{ask}</Cell>
                      </QuoteRow>
                    ))}
                  </tbody>
                </Quotes>
              </List>
              <Tabs $pad={3}>
                <Tab $on>Symbols</Tab>
                <Tab>Tick Chart</Tab>
                <TabEnd />
              </Tabs>
            </Watch>
            <ChartColumn>
              <Chart />
              <Tabs $pad={4}>
                <ChartTab>MCRO,M15</ChartTab>
                <Tab $on>IDBI,M15</Tab>
                <ChartTab>NIFTY,M5</ChartTab>
                <TabEnd />
                <TabArrows>
                  <svg width="5" height="8"><path d="M4 0v8L0 4z" fill="#888" /></svg>
                  <svg width="5" height="8"><path d="M0 0v8l4-4z" fill="#888" /></svg>
                </TabArrows>
              </Tabs>
            </ChartColumn>
          </Body>
          <StatusBar>
            <StatusText>For Help, press F1</StatusText>
            <Status $w={115}>Default</Status>
            <Status $w={103}>2016.08.31 14:45</Status>
            <Status $w={70}>O: 73.00</Status>
            <Status $w={71}>H: 73.10</Status>
            <Status $w={68}>L: 72.75</Status>
            <Status $w={70}>C: 73.00</Status>
            <Status $w={66}>V: 57</Status>
            <Status $w={149}>
              <svg width="24" height="14" viewBox="0 0 24 14">
                {[0, 1, 2, 3, 4, 5, 6, 7].map((i) => (
                  <g key={i}>
                    <rect x={i * 3} y="0" width="2" height={9 - i} fill="#5a7a10" />
                    <rect x={i * 3} y={11 - i} width="2" height={3 + i} fill="#a01810" />
                  </g>
                ))}
              </svg>
              7889/11 kb
              <Resize width="15" height="15" viewBox="0 0 15 15">
                <path d="M1 15L15 1M5 15L15 5M9 15l6-6M13 15l2-2" stroke="#999" strokeWidth="1.500" />
              </Resize>
            </Status>
          </StatusBar>
        </Client>
      </Window>
    </>
  )
}

export default App;
